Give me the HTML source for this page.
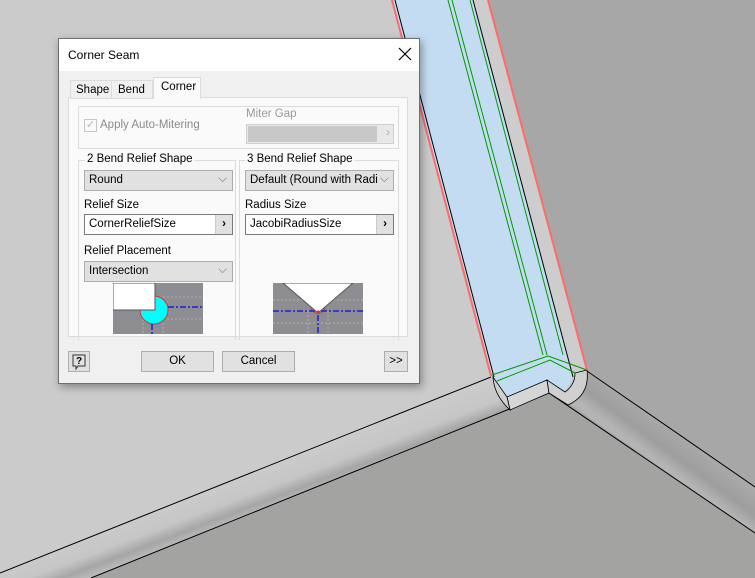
<!DOCTYPE html>
<html><head><meta charset="utf-8"><style>
*{box-sizing:border-box;margin:0;padding:0}
body{width:755px;height:578px;overflow:hidden;position:relative;font-family:"Liberation Sans",sans-serif;font-size:11.5px;color:#000;background:#cbcbcb}
.a{position:absolute}
.dlg{left:58px;top:38px;width:362px;height:346px;background:#f0f0f0;border:1px solid #6e6e6e;box-shadow:2px 3px 8px rgba(0,0,0,.35)}
.sel{background:#e1e1e1;border:1px solid #adadad;height:21px;padding:3px 4px;white-space:nowrap;overflow:hidden}
.inp{background:#fff;border:1px solid #7a7a7a;height:21px;padding:3px 4px}
.arr{position:absolute;right:0;top:0;width:17px;height:19px;background:#e1e1e1;border-left:1px solid #ccc;text-align:center;font-weight:bold;line-height:19px}
.btn{background:#e1e1e1;border:1px solid #adadad;height:21px;text-align:center;line-height:19px}
.grp{border:1px solid #dcdcdc}
</style></head><body>
<svg class="a" style="left:0;top:0" width="755" height="578">
<defs>
<linearGradient id="g1" gradientUnits="userSpaceOnUse" x1="245" y1="475" x2="259" y2="512"><stop offset="0" stop-color="#cbcbcb"/><stop offset="0.5" stop-color="#c6c6c6"/><stop offset="0.8" stop-color="#a6a6a6"/><stop offset="1" stop-color="#b8b8b8"/></linearGradient>
<linearGradient id="g2" gradientUnits="userSpaceOnUse" x1="680" y1="435" x2="660" y2="462"><stop offset="0" stop-color="#a9a9a9"/><stop offset="0.6" stop-color="#9e9e9e"/><stop offset="1" stop-color="#b4b4b4"/></linearGradient>
</defs>
<rect width="755" height="578" fill="#cbcbcb"/>
<polygon points="430,0 755,0 755,487 587,370" fill="#a7a7a7"/>
<polygon points="0,573 491,377 549,393 91,578 0,578" fill="url(#g1)"/>
<polygon points="587,371 755,487 755,533 568,403" fill="url(#g2)"/>
<polygon points="91,578 549,393 568,403 755,533 755,578" fill="#a3a3a2"/>
<polyline points="0,573 491,377" stroke="#000" fill="none"/>
<polyline points="91,578 549,393 755,533" stroke="#000" fill="none"/>
<polyline points="587,371 755,487" stroke="#000" fill="none"/>
<polygon points="392,0 488,0 587,370 575,373 565,392 547,380 507,397 493,377" fill="#c4dcf2"/>
<polygon points="473,0 488,0 587,370 573,377" fill="#cdcdcd"/>
<polygon points="507,397 547,380 549,393 510,410" fill="#d6d6d6" stroke="#000" stroke-width="0.8"/>
<path d="M547,380 L565,392 Q575,385 575,373 L587,370 Q590,395 568,405 L549,393Z" fill="#d0d0d0" stroke="#000" stroke-width="0.8"/>
<path d="M493,377 Q494,395 510,410 L507,397Z" fill="#d0d0d0" stroke="#000" stroke-width="0.8"/>
<line x1="392" y1="0" x2="491" y2="376" stroke="#ff6a6a" stroke-width="2"/>
<line x1="488" y1="0" x2="587" y2="370" stroke="#ff6a6a" stroke-width="2"/>
<line x1="395" y1="0" x2="494" y2="377" stroke="#000"/>
<line x1="473" y1="0" x2="573" y2="377" stroke="#000"/>
<line x1="448" y1="0" x2="543" y2="355" stroke="#090"/>
<line x1="452" y1="0" x2="547" y2="355" stroke="#090"/>
<line x1="470" y1="0" x2="563" y2="355" stroke="#090"/>
<polyline points="492,375 548,356 587,370" stroke="#090" fill="none"/>
<polyline points="497,381 550,360 575,373" stroke="#090" fill="none"/>
</svg>
<div class="a dlg">
 <div class="a" style="left:0;top:0;width:360px;height:32px;background:#fff"></div>
 <div class="a" style="left:9px;top:9px;font-size:12px">Corner Seam</div>
 <svg class="a" style="left:339px;top:8px" width="14" height="14"><path d="M1 1L13 13M13 1L1 13" stroke="#000" stroke-width="1.2"/></svg>
 <div class="a" style="left:9px;top:58px;width:340px;height:240px;background:#fafafa;border:1px solid #dcdcdc"></div>
 <div class="a" style="left:11px;top:41px;width:42px;height:19px;border:1px solid #dcdcdc;background:#f0f0f0;padding:3px 5px">Shape</div>
 <div class="a" style="left:52px;top:41px;width:42px;height:19px;border:1px solid #dcdcdc;background:#f0f0f0;padding:3px 6px">Bend</div>
 <div class="a" style="left:94px;top:38px;width:48px;height:22px;border:1px solid #dcdcdc;border-bottom:none;background:#fafafa;padding:3px 7px">Corner</div>
 <div class="a grp" style="left:19px;top:67px;width:321px;height:43px"></div>
 <div class="a" style="left:25px;top:80px;width:13px;height:13px;border:1px solid #c6c6c6;color:#b8b8b8;font-size:11px;line-height:11px;text-align:center">✓</div>
 <div class="a" style="left:41px;top:80px;color:#8a8a8a">Apply Auto-Mitering</div>
 <div class="a" style="left:187px;top:69px;color:#9a9a9a">Miter Gap</div>
 <div class="a" style="left:187px;top:85px;width:148px;height:20px;border:1px solid #cfcfcf;background:#e8e8e8"><div class="a" style="left:1px;top:1px;width:129px;height:16px;background:#c8c8c8"></div><div class="a" style="right:3px;top:2px;color:#aaa">›</div></div>
 <div class="a grp" style="left:19px;top:121px;width:158px;height:180px;border-bottom:none"></div>
 <div class="a" style="left:26px;top:114px;background:#fafafa;padding:0 2px">2 Bend Relief Shape</div>
 <div class="a grp" style="left:180px;top:121px;width:160px;height:180px;border-bottom:none"></div>
 <div class="a" style="left:186px;top:114px;background:#fafafa;padding:0 2px">3 Bend Relief Shape</div>
 <div class="a sel" style="left:25px;top:131px;width:149px">Round<span class="a" style="right:5px;top:2px;color:#777">⌵</span></div>
 <div class="a" style="left:25px;top:160px">Relief Size</div>
 <div class="a inp" style="left:25px;top:175px;width:149px">CornerReliefSize<div class="arr">›</div></div>
 <div class="a" style="left:25px;top:206px">Relief Placement</div>
 <div class="a sel" style="left:25px;top:222px;width:149px">Intersection<span class="a" style="right:5px;top:2px;color:#777">⌵</span></div>
 <div class="a sel" style="left:186px;top:131px;width:149px">Default (Round with Radiu<span class="a" style="right:0;top:0;width:16px;height:19px;padding:2px 3px;color:#777;background:#e1e1e1">⌵</span></div>
 <div class="a" style="left:186px;top:160px">Radius Size</div>
 <div class="a inp" style="left:186px;top:175px;width:149px">JacobiRadiusSize<div class="arr">›</div></div>
 <svg class="a" style="left:54px;top:244px" width="90" height="51">
  <rect width="90" height="51" fill="#8e8e92"/>
  <g stroke="#b0b0b0" stroke-dasharray="2,2"><line x1="30" y1="14" x2="90" y2="14"/><line x1="30" y1="36" x2="90" y2="36"/><line x1="30" y1="36" x2="30" y2="51"/><line x1="50" y1="36" x2="50" y2="51"/></g>
  <circle cx="41" cy="27" r="14" fill="#00ffff" stroke="#e03030"/>
  <line x1="55" y1="24" x2="90" y2="24" stroke="#1c1ce0" stroke-width="1.5" stroke-dasharray="6,2,2,2"/>
  <line x1="39" y1="41" x2="39" y2="51" stroke="#1c1ce0" stroke-width="1.5" stroke-dasharray="6,2,2,2"/>
  <rect x="0" y="0" width="42" height="27" fill="#fff" stroke="#555"/>
 </svg>
 <svg class="a" style="left:214px;top:244px" width="90" height="51">
  <rect width="90" height="51" fill="#8e8e92"/>
  <g stroke="#b0b0b0" stroke-dasharray="2,2"><line x1="0" y1="17" x2="90" y2="17"/><line x1="0" y1="40" x2="90" y2="40"/><line x1="35" y1="28" x2="35" y2="51"/><line x1="55" y1="28" x2="55" y2="51"/></g>
  <path d="M38 26 Q45 35 52 26Z" fill="#00ffff" stroke="#e03030"/>
  <line x1="0" y1="28" x2="90" y2="28" stroke="#1c1ce0" stroke-width="1.5" stroke-dasharray="6,2,2,2"/>
  <line x1="45" y1="32" x2="45" y2="51" stroke="#1c1ce0" stroke-width="1.5" stroke-dasharray="6,2,2,2"/>
  <polygon points="10,0 80,0 45,30" fill="#fff" stroke="#555"/>
  <circle cx="45" cy="29" r="1.6" fill="#e03030"/>
 </svg>
 <div class="a btn" style="left:9px;top:312px;width:22px;height:21px">
  <svg width="20" height="19"><path d="M4 3H16V14H9L7 17V14H4Z" fill="none" stroke="#333"/><text x="10" y="12" font-size="10" font-weight="bold" text-anchor="middle" font-family="Liberation Sans">?</text></svg>
 </div>
 <div class="a btn" style="left:82px;top:312px;width:73px">OK</div>
 <div class="a btn" style="left:163px;top:312px;width:73px">Cancel</div>
 <div class="a btn" style="left:325px;top:312px;width:24px">&gt;&gt;</div>
</div>
</body></html>
